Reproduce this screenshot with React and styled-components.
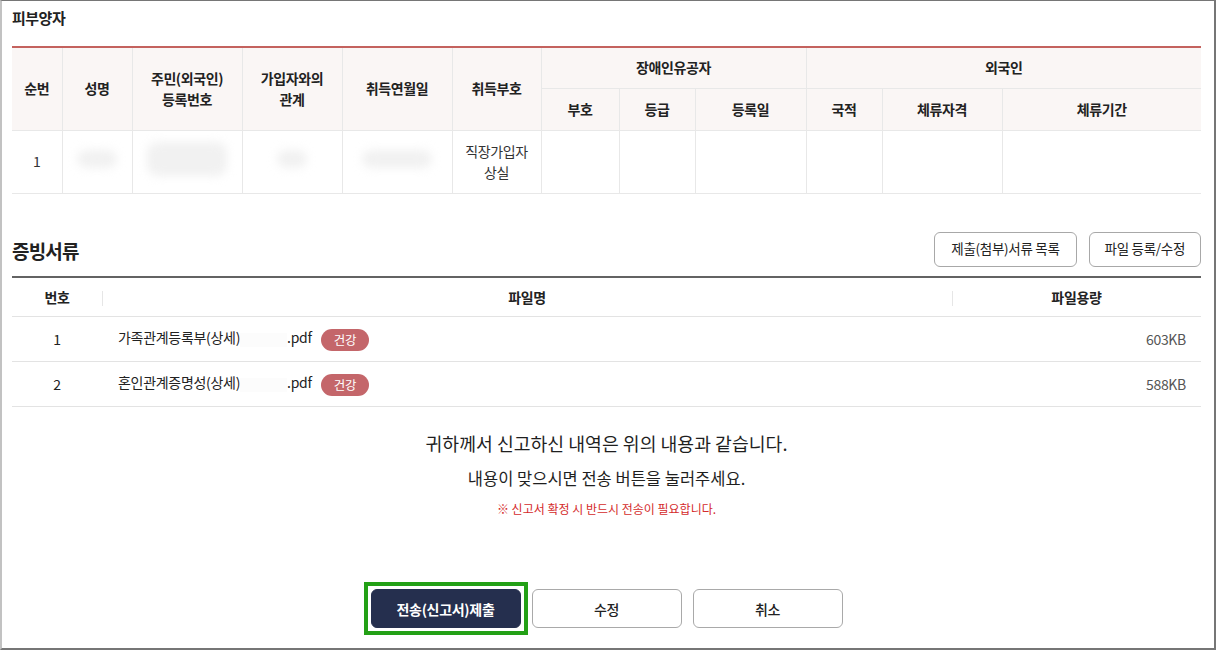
import styled, { createGlobalStyle } from 'styled-components'

const GlobalStyle = createGlobalStyle`
  * { box-sizing: border-box; }
  body {
    margin: 0;
    background: #fff;
    font-family: "Noto Sans CJK KR", "Noto Sans", sans-serif;
    color: #222;
  }
`

const Frame = styled.div`
  width: 1216px;
  height: 650px;
  border-top: 1px solid #767676;
  border-right: 2px solid #767676;
  border-bottom: 2px solid #767676;
  border-left: 2px solid #c2c2c2;
  padding: 0 13px 0 10px;
  overflow: hidden;
`

const Title = styled.h3`
  margin: 0;
  padding-top: 7px;
  height: 45px;
  font-size: 15px;
  line-height: 20px;
  font-weight: 700;
  letter-spacing: -0.5px;
`

const Grid = styled.table`
  width: 1189px;
  table-layout: fixed;
  border-collapse: collapse;
  border-top: 2px solid #c4625e;
  border-bottom: 1px solid #b8b8b8;
  font-size: 14px;
  letter-spacing: -0.4px;

  th, td {
    border: 1px solid #e8e8e8;
    text-align: center;
    vertical-align: middle;
    padding: 0;
    line-height: 21px;
  }
  tr > *:first-child { border-left: none; }
  tr > *:last-child { border-right: none; }
  th {
    background: #faf6f5;
    font-weight: 600;
    color: #222;
  }
  td { color: #333; }
`

const HeadRow = styled.tr`
  height: ${p => p.$h}px;
`

const Blur = styled.span`
  display: inline-block;
  width: ${p => p.$w}px;
  height: ${p => p.$h || 18}px;
  border-radius: 10px;
  background: #f1f1f1;
  filter: blur(5px);
`

const SectionBar = styled.div`
  display: flex;
  align-items: center;
  justify-content: space-between;
  height: 35px;
  margin-top: 38px;
  margin-bottom: 9px;
`

const SectionTitle = styled.h2`
  margin: 0;
  font-size: 19px;
  font-weight: 700;
  letter-spacing: -0.8px;
  padding-top: 3px;
`

const Tools = styled.div`
  display: flex;
  gap: 12px;
`

const ToolButton = styled.button`
  height: 35px;
  padding: 0 ${p => p.$px || 16}px;
  border: 1px solid #a8a8a8;
  border-radius: 6px;
  background: #fff;
  font-family: inherit;
  font-size: 13.5px;
  color: #222;
  letter-spacing: -0.3px;
  line-height: 1;
`

const FileTable = styled.table`
  width: 1189px;
  table-layout: fixed;
  border-collapse: collapse;
  border-top: 2px solid #636363;
  border-bottom: 1px solid #b8b8b8;
  font-size: 14px;
  letter-spacing: -0.3px;

  th {
    position: relative;
    height: 40px;
    font-weight: 600;
    padding: 0;
    border-bottom: 1px solid #e3e3e3;
  }
  th + th::before {
    content: '';
    position: absolute;
    left: 0;
    top: 13px;
    width: 1px;
    height: 15px;
    background: #e6e6e6;
  }
  td {
    height: 45px;
    padding: 0;
    border-bottom: 1px solid #e3e3e3;
    color: #222;
  }
`

const NumCell = styled.td`
  text-align: center;
`

const NameCell = styled.td`
  padding-left: 16px !important;
  white-space: nowrap;
`

const Hidden = styled.span`
  display: inline-block;
  width: 47px;
  height: 14px;
  vertical-align: middle;
  background: #fcfcfc;
`

const Badge = styled.span`
  display: inline-block;
  margin-left: 9px;
  padding: 0 13px;
  height: 22px;
  line-height: 22px;
  border-radius: 11px;
  background: #c4666a;
  color: #fff;
  font-size: 12.5px;
  vertical-align: middle;
`

const SizeCell = styled.td`
  text-align: right;
  padding-right: 15px !important;
  color: #555 !important;
`

const Notice = styled.div`
  display: flex;
  flex-direction: column;
  align-items: center;
  margin-top: 23px;
`

const Lead = styled.p`
  margin: 0;
  font-size: ${p => p.$size}px;
  line-height: ${p => p.$lh}px;
  margin-bottom: ${p => p.$mb || 0}px;
  color: ${p => p.$color || '#1f1f1f'};
  letter-spacing: 0;
`

const Actions = styled.div`
  display: flex;
  justify-content: center;
  gap: 11px;
  margin-top: 72px;
`

const ActionButton = styled.button`
  position: relative;
  width: 150px;
  height: 39px;
  border-radius: 6px;
  font-family: inherit;
  font-size: 14px;
  letter-spacing: -0.3px;
  border: 1px solid ${p => (p.$primary ? '#252f4e' : '#a9a9a9')};
  background: ${p => (p.$primary ? '#252f4e' : '#fff')};
  color: ${p => (p.$primary ? '#fff' : '#222')};
  font-weight: ${p => (p.$primary ? 600 : 500)};

  ${p => p.$focus && `
    &::after {
      content: '';
      position: absolute;
      inset: -8px -8px -8px -8px;
      border: 4px solid #23a016;
      pointer-events: none;
    }
  `}
`

const cols = [50, 70, 110, 100, 110, 89, 78, 76, 111, 76, 120, 199]

const files = [
  { no: 1, name: '가족관계등록부(상세)', size: '603KB' },
  { no: 2, name: '혼인관계증명성(상세)', size: '588KB' },
]

export default function App() {
  return (
    <>
      <GlobalStyle />
      <Frame>
        <Title>피부양자</Title>
        <Grid>
          <colgroup>
            {cols.map((w, i) => <col key={i} style={{ width: w }} />)}
          </colgroup>
          <thead>
            <HeadRow $h={41}>
              <th rowSpan={2}>순번</th>
              <th rowSpan={2}>성명</th>
              <th rowSpan={2}>주민(외국인)<br />등록번호</th>
              <th rowSpan={2}>가입자와의<br />관계</th>
              <th rowSpan={2}>취득연월일</th>
              <th rowSpan={2}>취득부호</th>
              <th colSpan={3}>장애인유공자</th>
              <th colSpan={3}>외국인</th>
            </HeadRow>
            <HeadRow $h={42}>
              <th>부호</th>
              <th>등급</th>
              <th>등록일</th>
              <th>국적</th>
              <th>체류자격</th>
              <th>체류기간</th>
            </HeadRow>
          </thead>
          <tbody>
            <HeadRow $h={63}>
              <td>1</td>
              <td><Blur $w={40} /></td>
              <td><Blur $w={80} $h={34} /></td>
              <td><Blur $w={30} /></td>
              <td><Blur $w={70} /></td>
              <td>직장가입자<br />상실</td>
              <td />
              <td />
              <td />
              <td />
              <td />
              <td />
            </HeadRow>
          </tbody>
        </Grid>

        <SectionBar>
          <SectionTitle>증빙서류</SectionTitle>
          <Tools>
            <ToolButton $px={16}>제출(첨부)서류 목록</ToolButton>
            <ToolButton $px={15}>파일 등록/수정</ToolButton>
          </Tools>
        </SectionBar>

        <FileTable>
          <colgroup>
            <col style={{ width: 90 }} />
            <col style={{ width: 850 }} />
            <col style={{ width: 249 }} />
          </colgroup>
          <thead>
            <tr>
              <th>번호</th>
              <th>파일명</th>
              <th>파일용량</th>
            </tr>
          </thead>
          <tbody>
            {files.map(f => (
              <tr key={f.no}>
                <NumCell>{f.no}</NumCell>
                <NameCell>
                  {f.name}<Hidden />.pdf<Badge>건강</Badge>
                </NameCell>
                <SizeCell>{f.size}</SizeCell>
              </tr>
            ))}
          </tbody>
        </FileTable>

        <Notice>
          <Lead $size={18.3} $lh={26} $mb={10}>귀하께서 신고하신 내역은 위의 내용과 같습니다.</Lead>
          <Lead $size={16.5} $lh={24} $mb={11}>내용이 맞으시면 전송 버튼을 눌러주세요.</Lead>
          <Lead $size={12} $lh={16} $color="#d42b2b">※ 신고서 확정 시 반드시 전송이 필요합니다.</Lead>
        </Notice>

        <Actions>
          <ActionButton $primary $focus>전송(신고서)제출</ActionButton>
          <ActionButton>수정</ActionButton>
          <ActionButton>취소</ActionButton>
        </Actions>
      </Frame>
    </>
  )
}
